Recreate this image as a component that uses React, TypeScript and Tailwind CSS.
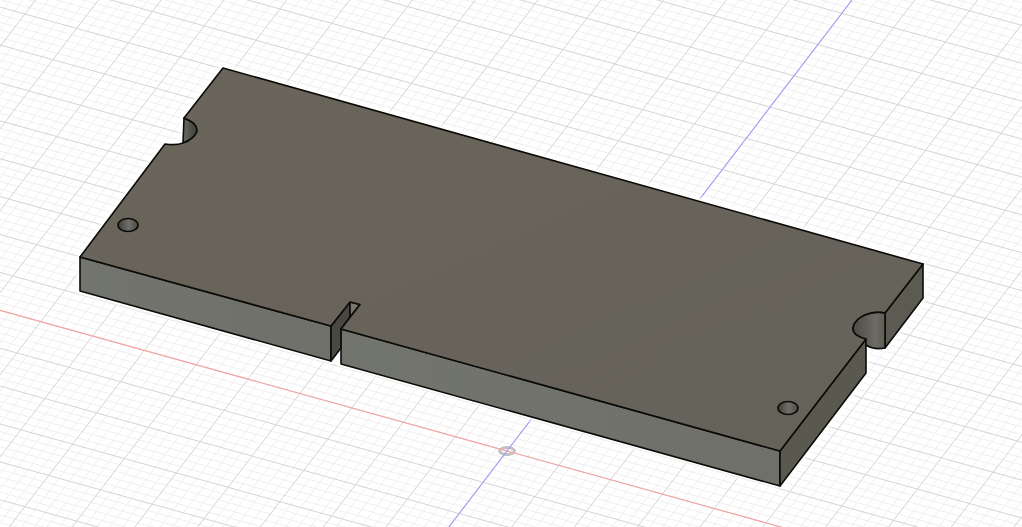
import React from 'react';

// grid is the same two families of parallel lines, every 5th one is heavier
const W = 1022;
const H = 527;
const ORIGIN = { x: 507, y: 451 };
const SLOPE_A = 0.2775; // along the red axis
const SLOPE_B = -0.765; // dx per dy along the blue axis
const MAJOR_A = 37.9;
const MAJOR_B = 62.8;

const OUTLINE =
  'M223 68 L923 264 L923 298 L885 348 L866 345 L866 373 L780 486 L341 364 L341 348 L331 361 L80 291 L80 257 L165 144 L183 143 L184 118 Z';

function lineA(k: number) {
  const y0 = ORIGIN.y - ORIGIN.x * SLOPE_A + k * MAJOR_A;
  return { x1: 0, y1: y0, x2: W, y2: y0 + W * SLOPE_A };
}

function lineB(k: number) {
  const x0 = ORIGIN.x - ORIGIN.y * SLOPE_B + k * MAJOR_B;
  return { x1: x0, y1: 0, x2: x0 + H * SLOPE_B, y2: H };
}

function range(from: number, to: number) {
  const out: number[] = [];
  for (let i = from; i <= to; i++) out.push(i);
  return out;
}

function Grid() {
  const as = range(-100, 60);
  const bs = range(-120, 120);
  return (
    <g>
      {as.filter(i => i % 5 !== 0).map(i => <line key={'a' + i} {...lineA(i / 5)} stroke="#efefef" strokeWidth={1} />)}
      {bs.filter(i => i % 5 !== 0).map(i => <line key={'b' + i} {...lineB(i / 5)} stroke="#efefef" strokeWidth={1} />)}
      {as.filter(i => i % 5 === 0).map(i => <line key={'A' + i} {...lineA(i / 5)} stroke="#d4d4d4" strokeWidth={1} />)}
      {bs.filter(i => i % 5 === 0).map(i => <line key={'B' + i} {...lineB(i / 5)} stroke="#d4d4d4" strokeWidth={1} />)}
      <ellipse cx={507} cy={451} rx={7.5} ry={3.5} fill="none" stroke="#c2c2c2" strokeWidth={3} />
      <line {...lineA(0)} stroke="#f6a3a3" strokeWidth={1.1} />
      <line {...lineB(0)} stroke="#9c9ff5" strokeWidth={1.1} />
    </g>
  );
}

function Plate() {
  const edge = { stroke: '#0c0b08', strokeWidth: 1.6, strokeLinejoin: 'round' as const };
  return (
    <g>
      <defs>
        <linearGradient id="top" x1="0" y1="0" x2="1" y2="1">
          <stop offset="0" stopColor="#6a655a" />
          <stop offset="1" stopColor="#65625a" />
        </linearGradient>
        <linearGradient id="front" x1="0" y1="0" x2="1" y2="0">
          <stop offset="0" stopColor="#72746e" />
          <stop offset="1" stopColor="#6f706a" />
        </linearGradient>
        <linearGradient id="notchR" x1="0" y1="0" x2="1" y2="0">
          <stop offset="0" stopColor="#4b4a43" />
          <stop offset="0.7" stopColor="#6c6c64" />
          <stop offset="1" stopColor="#5f5e56" />
        </linearGradient>
        <linearGradient id="notchL" x1="0" y1="0" x2="1" y2="0">
          <stop offset="0" stopColor="#6a6b64" />
          <stop offset="1" stopColor="#3f3e38" />
        </linearGradient>
        <linearGradient id="hole" x1="0" y1="0" x2="1" y2="0">
          <stop offset="0" stopColor="#3f3e38" />
          <stop offset="0.55" stopColor="#70706a" />
          <stop offset="1" stopColor="#4a4942" />
        </linearGradient>
        <filter id="halo" x="-5%" y="-5%" width="110%" height="110%">
          <feGaussianBlur stdDeviation="1.6" />
        </filter>
      </defs>

      {/* grid fades out right next to the body */}
      <path d={OUTLINE} fill="#ffffff" stroke="#ffffff" strokeWidth={7} strokeLinejoin="round" filter="url(#halo)" opacity={0.85} />

      {/* front faces */}
      <path d="M80 257 L331 326 L331 361 L80 291 Z" fill="url(#front)" {...edge} />
      <path d="M341 329 L780 451 L780 486 L341 364 Z" fill="url(#front)" {...edge} />
      {/* right faces */}
      <path d="M780 451 L866 339 L866 373 L780 486 Z" fill="#5a5950" {...edge} />
      <path d="M885 313 L923 264 L923 298 L885 348 Z" fill="#5c5b52" {...edge} />
      {/* slot walls */}
      <path d="M331 326 L350 302 L350 317 L341 329 L341 348 L331 361 Z" fill="#494840" {...edge} />
      <path d="M350 302 L360 304.5 L350 317 Z" fill="#77776f" {...edge} />
      {/* right notch wall */}
      <path d="M885 313 C872 310 856 316 853 327 C852 333 858 337 866 339 L866 345 C872 349 880 349 885 348 Z" fill="url(#notchR)" {...edge} />
      {/* left notch wall */}
      <path d="M184 118 C192 121 197 125 197 130 C197 135 190 141 183 143 Z" fill="url(#notchL)" {...edge} />

      {/* top face */}
      <path
        d="M223 68 L923 264 L885 313 C872 310 856 316 853 327 C852 333 858 337 866 339 L780 451 L341 329 L360 304.5 L350 302 L331 326 L80 257 L165 144 C172 145 178 145 183 143 C190 141 197 135 197 130 C197 125 192 121 184 118 Z"
        fill="url(#top)"
        {...edge}
      />

      <ellipse cx={128} cy={225} rx={10} ry={6.5} fill="url(#hole)" {...edge} />
      <ellipse cx={788} cy={408} rx={10} ry={6.5} fill="url(#hole)" {...edge} />
    </g>
  );
}

export default function App() {
  return (
    <div className="w-[1022px] h-[527px] bg-white overflow-hidden">
      <svg width={W} height={H} viewBox={`0 0 ${W} ${H}`} className="block">
        <Grid />
        <Plate />
      </svg>
    </div>
  );
}
